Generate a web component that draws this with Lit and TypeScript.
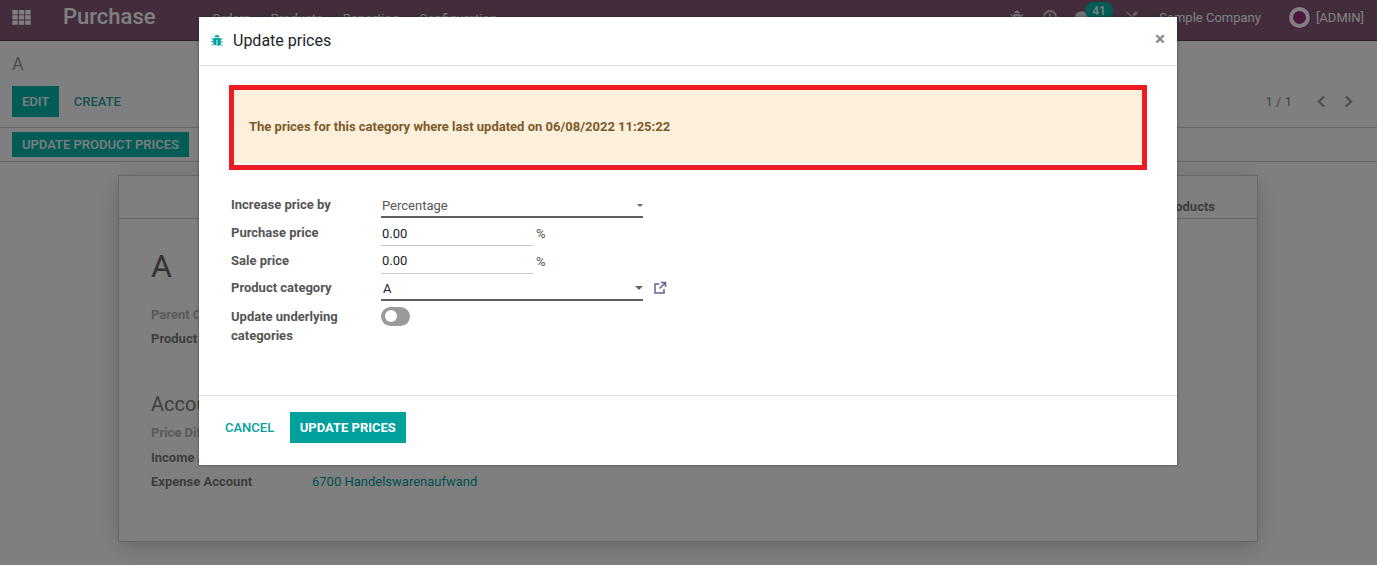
import { LitElement, html, css, svg } from "lit";
import { customElement } from "lit/decorators.js";

const gridCells = [0, 1, 2].flatMap((y) =>
  [0, 1, 2].map((x) => svg`<rect x=${x * 6.5} y=${y * 5.2} width="5.5" height="4.4" rx=".5" />`)
);

@customElement("app-root")
export class AppRoot extends LitElement {
  static styles = css`
    :host {
      display: block;
      position: relative;
      width: 1377px;
      height: 565px;
      overflow: hidden;
      font-family: Roboto, "Noto Sans", sans-serif;
      font-size: 13px;
      color: #7c7c7c;
      background: #fff;
    }
    svg { display: block; }

    /* underlying page */
    .nav {
      height: 41px;
      box-sizing: border-box;
      background: #875a7b;
      border-bottom: 1px solid #5e3f56;
      display: flex;
      align-items: center;
      color: #fff;
      padding-bottom: 6px;
    }
    .apps { margin-left: 12px; fill: #fff; width: 19px; height: 15px; }
    .brand { margin-left: 32px; font-size: 22px; font-weight: 500; width: 149px; line-height: 34px; }
    .menu { display: flex; gap: 20px; font-size: 13px; padding-top: 2px; }
    .nav-right { margin-left: auto; display: flex; align-items: center; height: 100%; }
    .nav-icon { fill: #fff; width: 14px; height: 14px; opacity: .85; }
    .bug { margin-right: 19px; }
    .clock { margin-right: 18px; fill: none; stroke: #fff; stroke-width: 2; opacity: .7; }
    .chat { position: relative; margin-right: 36px; }
    .badge {
      position: absolute; left: 10px; top: -8px;
      background: #00b8aa; color: #fff; font-size: 12px; font-weight: 500;
      border-radius: 10px; padding: 1px 7px 0; line-height: 16px;
    }
    .tools { opacity: .6; }
    .company { margin-left: 20px; margin-right: 28px; }
    .avatar {
      width: 13px; height: 13px; border: 4px solid #fff; border-radius: 50%;
      background: #9b2d7f; box-shadow: 0 0 0 1px #a0338a; margin-right: 6px;
    }
    .user { margin-right: 13px; }

    .cp { padding: 0 12px; }
    .crumb { font-size: 18px; line-height: 24px; padding-top: 11px; color: #999; height: 34px; box-sizing: border-box; }
    .cp-row {
      display: flex; align-items: flex-start; height: 53px; box-sizing: border-box;
      border-bottom: 1px solid #ccc; margin: 0 -12px; padding: 11px 12px 0;
    }
    .btn-p {
      background: #00b8aa; color: #fff; font-weight: 500; font-size: 13px;
      display: flex; align-items: center; box-sizing: border-box;
    }
    .edit { height: 31px; padding: 0 10px; }
    .create { margin-left: 14.5px; color: #2ba4a6; font-weight: 500; font-size: 13px; line-height: 31px; }
    .pager { margin-left: auto; display: flex; align-items: center; height: 31px; font-size: 13px; color: #8c8c8c; }
    .pager svg { width: 11px; height: 13px; fill: none; stroke: #9c9c9c; stroke-width: 2.4; }
    .pager .prev { margin-left: 24px; }
    .pager .next { margin-left: 16px; margin-right: 11px; }
    .cp-actions {
      height: 34px; box-sizing: border-box; border-bottom: 1px solid #ccc;
      display: flex; align-items: flex-start; padding: 4px 12px 0;
    }
    .update-p { height: 25px; padding: 0 10px; }

    .content { padding-top: 13px; }
    .sheet {
      width: 1140px; height: 367px; margin: 0 0 0 118px; box-sizing: border-box;
      border: 1px solid #ccc; background: #fff;
      box-shadow: 0 5px 20px -1px rgba(0, 0, 0, .2);
    }
    .box {
      height: 43px; border-bottom: 1px solid #ccc; box-sizing: border-box;
      display: flex; justify-content: flex-end; align-items: flex-end;
      padding: 0 42px 4px 0; font-weight: 700; font-size: 13px;
    }
    .sheet-body { padding: 0 32px; }
    .title { font-size: 32px; line-height: 40px; color: #666; margin-top: 27px; }
    .sheet-row { display: flex; height: 24px; align-items: center; font-weight: 700; }
    .sheet-row.top { margin-top: 16px; }
    .muted { color: #b4b4b4; }
    .section { font-size: 20px; line-height: 28px; margin-top: 40px; height: 28px; margin-bottom: 2px; }
    .price { margin-bottom: 1px; }
    .key { width: 161px; }
    .link { font-weight: 400; color: #00a09d; }

    .backdrop { position: absolute; inset: 0; background: rgba(0, 0, 0, .5); }

    /* dialog */
    .modal {
      position: absolute; left: 199px; top: 17px; width: 978px; height: 448px;
      background: #fff; display: flex; flex-direction: column; color: #4c4c4c;
      box-shadow: 0 0 3px rgba(0, 0, 0, .4);
    }
    .m-head {
      height: 49px; box-sizing: border-box; border-bottom: 1px solid #dee2e6;
      display: flex; align-items: center; padding: 0 12px 2px 12px;
      font-size: 16px; color: #212529;
    }
    .m-bug { width: 12px; height: 13px; fill: #00a09d; margin-right: 10px; }
    .close { margin-left: auto; font-weight: 700; font-size: 19px; color: #8a8a8a; line-height: 20px; margin-top: -3px; }
    .m-body { flex: 1; padding: 19px 30px 0; }
    .alert-frame { border: 5px solid #ed1c24; padding-bottom: 2px; height: 85px; box-sizing: border-box; }
    .alert {
      height: 100%; background: #fcefdc; display: flex; align-items: center;
      padding: 0 15px; font-weight: 700; font-size: 13px; color: #7d5a29;
    }
    .form {
      display: grid; grid-template-columns: 150px 1fr; margin: 22px 2px 0;
      grid-template-rows: 28px 27.5px 27.5px 28.5px auto;
    }
    .lbl { font-weight: 700; color: #555; font-size: 13px; line-height: 19px; padding-top: 3px; }
    .cell { display: flex; align-items: flex-start; }
    .select {
      width: 262px; height: 26px; border-bottom: 2px solid #5f5f5f; box-sizing: border-box;
      display: flex; align-items: center; justify-content: space-between; padding: 3px 0 0 1px;
    }
    .select.first { color: #555; }
    .caret { width: 0; height: 0; border-left: 3.5px solid transparent; border-right: 3.5px solid transparent; border-top: 3.5px solid #666; }
    .select.second { color: #212529; padding: 2px 0 0 2px; }
    .select.second .caret { border-left-width: 4.5px; border-right-width: 4.5px; border-top-width: 4px; }
    .input {
      width: 152px; height: 26px; box-sizing: border-box; border-bottom: 1px solid #c8c8c8;
      padding: 1.5px 0 0 1px; display: flex; align-items: center; color: #212529;
    }
    .pct { margin-left: 3px; padding-top: 6px; font-size: 13px; color: #555; }
    .ext { width: 14px; height: 14px; margin: 6px 0 0 10px; fill: none; stroke: #66609a; stroke-width: 1.5; }
    .toggle { width: 29px; height: 19px; border-radius: 10px; background: #9a9a9a; position: relative; margin-top: 3px; }
    .toggle::after {
      content: ""; position: absolute; left: 4px; top: 3.5px; width: 12px; height: 12px;
      border-radius: 50%; background: #fff;
    }
    .m-foot {
      height: 70px; box-sizing: border-box; border-top: 1px solid #dee2e6;
      display: flex; align-items: flex-start; padding: 16px 16px 0;
    }
    .cancel {
      height: 31px; display: flex; align-items: center; padding: 0 10px;
      color: #00a09d; font-weight: 500; font-size: 13px;
    }
    .apply {
      height: 31px; display: flex; align-items: center; padding: 0 10px;
      background: #00a09d; color: #fff; font-weight: 700; font-size: 13px; margin-left: 5.5px;
    }
  `;

  render() {
    const bug = svg`<path d="M6 0a2.600 2.600 0 0 0-2.600 2.500h5.200A2.600 2.600 0 0 0 6 0zM3 3.400h6c.5.4.9.9 1.100 1.500L12 3.600l.6.9-2.200 1.600v1.600h2.300v1.100h-2.300c0 .6-.2 1.100-.4 1.600l2 1.500-.6.9-1.900-1.400c-.8.9-1.800 1.400-3 1.500V5.500h-1V12.400c-1.200-.1-2.200-.6-3-1.500l-1.900 1.400-.6-.9 2-1.500c-.2-.5-.4-1-.4-1.600H-.7V7.200h2.300V6.100L-.6 4.500 0 3.600l1.900 1.300C2.100 4.300 2.500 3.800 3 3.400z"/>`;
    return html`
      <div class="nav">
        <svg class="apps" viewBox="0 0 18.500 15">${gridCells}</svg>
        <div class="brand">Purchase</div>
        <div class="menu"><span>Orders</span><span>Products</span><span>Reporting</span><span>Configuration</span></div>
        <div class="nav-right">
          <svg class="nav-icon bug" viewBox="-1 0 14 13">${bug}</svg>
          <svg class="nav-icon clock" viewBox="0 0 14 14"><circle cx="7" cy="7" r="6" /><path d="M7 3.500V7l2.500 1.500" /></svg>
          <div class="chat">
            <svg class="nav-icon" viewBox="0 0 14 14"><path d="M7 1.500c3.800 0 7 2.300 7 5.200s-3.200 5.200-7 5.200c-.8 0-1.500-.1-2.200-.3L1.500 13l.8-2.800C.9 9.300 0 8.100 0 6.700 0 3.800 3.200 1.500 7 1.500z" /></svg>
            <span class="badge">41</span>
          </div>
          <svg class="nav-icon tools" viewBox="0 0 14 14"><path d="M1 1l2 1 6.500 6.500 2-.5 2 3-2.500 2.500-3-2 .5-2L2 3zM11 1l2 2-4 4-2-2z" /></svg>
          <span class="company">Sample Company</span>
          <span class="avatar"></span>
          <span class="user">[ADMIN]</span>
        </div>
      </div>

      <div class="cp">
        <div class="crumb">A</div>
        <div class="cp-row">
          <div class="btn-p edit">EDIT</div>
          <div class="create">CREATE</div>
          <div class="pager">
            <span>1 / 1</span>
            <svg class="prev" viewBox="0 0 11 13"><path d="M8 1.500L3 6.500l5 5" /></svg>
            <svg class="next" viewBox="0 0 11 13"><path d="M3 1.500l5 5-5 5" /></svg>
          </div>
        </div>
      </div>
      <div class="cp-actions"><div class="btn-p update-p">UPDATE PRODUCT PRICES</div></div>

      <div class="content">
        <div class="sheet">
          <div class="box">Products</div>
          <div class="sheet-body">
            <div class="title">A</div>
            <div class="sheet-row top muted">Parent Category</div>
            <div class="sheet-row">Product Type</div>
            <div class="section">Account Properties</div>
            <div class="sheet-row muted price">Price Difference Account</div>
            <div class="sheet-row">Income Account</div>
            <div class="sheet-row"><span class="key">Expense Account</span><span class="link">6700 Handelswarenaufwand</span></div>
          </div>
        </div>
      </div>

      <div class="backdrop"></div>

      <div class="modal">
        <div class="m-head">
          <svg class="m-bug" viewBox="-1 0 14 13">${bug}</svg>
          <span>Update prices</span>
          <span class="close">×</span>
        </div>
        <div class="m-body">
          <div class="alert-frame">
            <div class="alert">The prices for this category where last updated on 06/08/2022 11:25:22</div>
          </div>
          <div class="form">
            <div class="lbl">Increase price by</div>
            <div class="cell"><div class="select first"><span>Percentage</span><span class="caret"></span></div></div>
            <div class="lbl">Purchase price</div>
            <div class="cell"><div class="input">0.00</div><span class="pct">%</span></div>
            <div class="lbl">Sale price</div>
            <div class="cell"><div class="input">0.00</div><span class="pct">%</span></div>
            <div class="lbl">Product category</div>
            <div class="cell">
              <div class="select second"><span>A</span><span class="caret"></span></div>
              <svg class="ext" viewBox="0 0 14 14"><path d="M11 8v4H2V3h4.500M8 1.500h4.500V6M12.500 1.500L6.500 7.500" /></svg>
            </div>
            <div class="lbl">Update underlying<br />categories</div>
            <div class="cell"><div class="toggle"></div></div>
          </div>
        </div>
        <div class="m-foot">
          <div class="cancel">CANCEL</div>
          <div class="apply">UPDATE PRICES</div>
        </div>
      </div>
    `;
  }
}
